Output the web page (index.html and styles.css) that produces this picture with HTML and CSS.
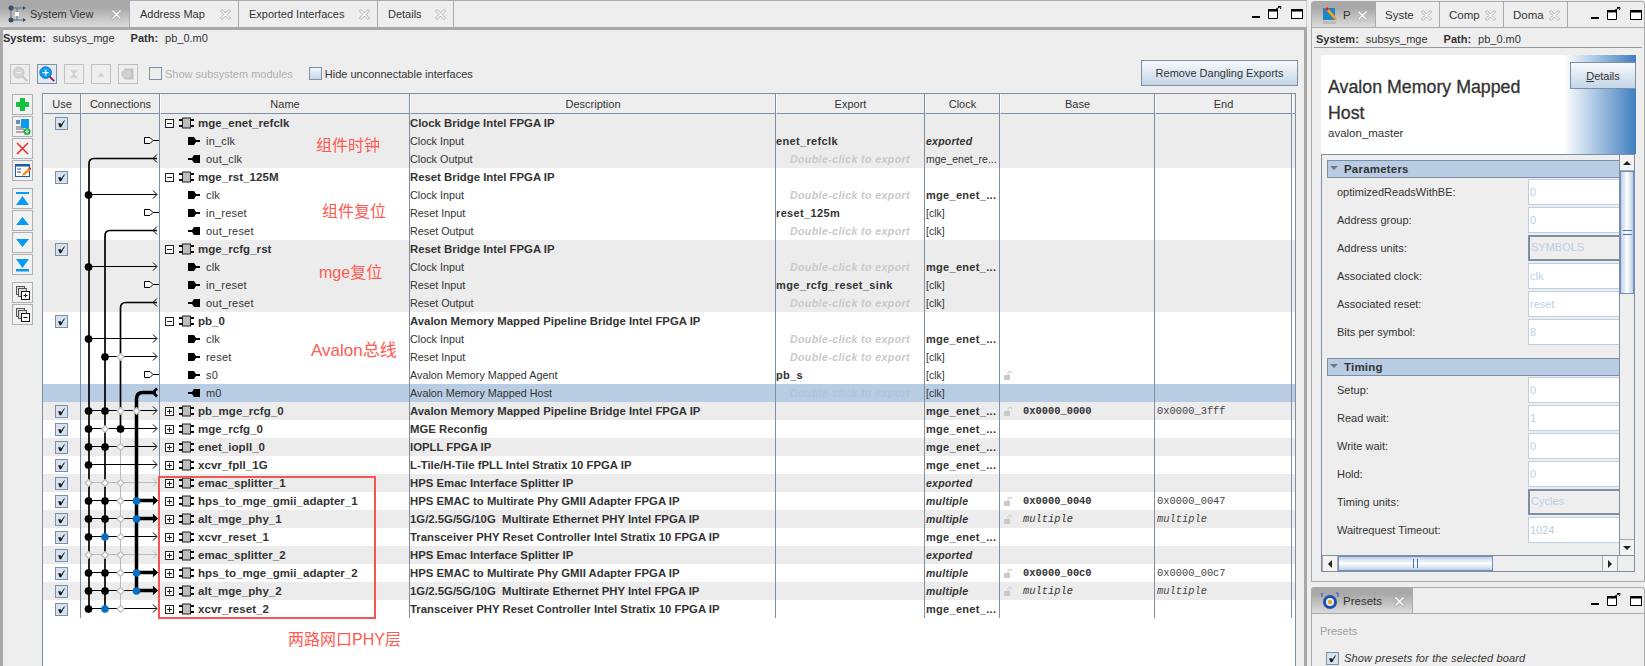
FILE: index.html
```html
<!DOCTYPE html>
<html lang="en">
<head>
<meta charset="utf-8">
<title>System View</title>
<link rel="stylesheet" href="styles.css">
</head>
<body class="app">
<svg class="sprite" width="0" height="0">
  <symbol id="x" viewBox="0 0 11 11"><path d="M2 0.5 5.5 4 9 0.5 10.5 2 7 5.5 10.5 9 9 10.5 5.5 7 2 10.5 0.5 9 4 5.5 0.5 2Z" fill="#fff" stroke="#999" stroke-width=".8"/></symbol>
  <symbol id="chip" viewBox="0 0 15 12"><path d="M0 2h4v2H0zM0 8h4v2H0zM11 2h4v2h-4zM11 8h4v2h-4z" fill="#111"/><rect x="3.5" y="1" width="8" height="10" fill="#bdbdbd" stroke="#222"/></symbol>
  <symbol id="plus" viewBox="0 0 9 9"><rect x=".5" y=".5" width="8" height="8" fill="#fff" stroke="#222"/><path d="M2 4.5h5M4.500 2v5" stroke="#222"/></symbol>
  <symbol id="minus" viewBox="0 0 9 9"><rect x=".5" y=".5" width="8" height="8" fill="#fff" stroke="#222"/><path d="M2 4.500h5" stroke="#222"/></symbol>
  <symbol id="in" viewBox="0 0 12 8"><path d="M0 0h6l2 3h4v2H8L6 8H0z" fill="#000"/></symbol>
  <symbol id="out" viewBox="0 0 12 8"><path d="M12 0H6L4 3H0v2h4l2 3h6z" fill="#000"/></symbol>
  <symbol id="chk" viewBox="0 0 13 13"><rect x=".5" y=".5" width="12" height="12" fill="#d5e2f0" stroke="#7c8fa5"/><path d="M3.500 6.500 5.500 6.500 6 8 9.500 3.500 6 10 4.800 10Z" fill="#111" stroke="#111" stroke-width=".5"/></symbol>
  <symbol id="lock" viewBox="0 0 9 9"><path d="M0 4h6v5H0z" fill="#c9c9c9"/><path d="M4 4V2a2 1.500 0 0 1 4 0" fill="none" stroke="#c9c9c9"/></symbol>
  <symbol id="wmin" viewBox="0 0 10 10"><rect x="0" y="7" width="8" height="2" fill="#000"/></symbol>
  <symbol id="wrest" viewBox="0 0 15 13"><path d="M.5 3.500h9v9h-9z" fill="#fff" stroke="#000"/><rect y="3" width="10" height="2.500"/><path d="M8 3 12 1M10 .5 13 .5 12.500 3" fill="none" stroke="#000"/></symbol>
  <symbol id="wmax" viewBox="0 0 12 10"><rect x=".5" y=".5" width="11" height="9" fill="#fff" stroke="#000"/><rect width="12" height="2.500"/></symbol>
</svg>

<section class="main">
  <nav class="tabbar">
    <div class="tab tab-active tab-sys">
      <svg class="tabicon" viewBox="0 0 18 18"><path d="M3 3h12M3 15h12M3 3v12M9 3v12" stroke="#57708c" fill="none"/><circle cx="3" cy="3" r="2.500" fill="#34506e"/><circle cx="3" cy="15" r="2.500" fill="#34506e"/><path d="M15 1l3 2-3 2zM15 13l3 2-3 2z" fill="#34506e"/><rect x="7" y="7" width="4" height="4" fill="#fff"/></svg>
      <span class="tablabel">System View</span><svg class="tabx"><use href="#x"/></svg>
    </div>
    <div class="tab tab-addr"><span class="tablabel">Address Map</span><svg class="tabx"><use href="#x"/></svg></div>
    <div class="tab tab-exp"><span class="tablabel">Exported Interfaces</span><svg class="tabx"><use href="#x"/></svg></div>
    <div class="tab tab-det"><span class="tablabel">Details</span><svg class="tabx"><use href="#x"/></svg></div>
    <div class="wins">
      <svg class="w-min"><use href="#wmin"/></svg><svg class="w-rest"><use href="#wrest"/></svg><svg class="w-max"><use href="#wmax"/></svg>
    </div>
  </nav>
  <div class="pane">
    <div class="sysline"><b>System:</b><span class="sysval">subsys_mge</span><b>Path:</b><span>pb_0.m0</span></div>
    <div class="toolbar">
      <span class="tbtn tbtn-off"><svg viewBox="0 0 20 20"><circle cx="8.500" cy="8.500" r="6" fill="#d0d0d0" stroke="#bbb"/><path d="M6 8.500h5" stroke="#eee" stroke-width="1.500"/><path d="M13 13l5 5" stroke="#bbb" stroke-width="2"/></svg></span>
      <span class="tbtn tbtn-on"><svg viewBox="0 0 20 20"><circle cx="8.500" cy="8.500" r="6.500" fill="#0a9bf0" stroke="#1570b0"/><path d="M5 8.500h7M8.500 5v7" stroke="#fff" stroke-width="1.500"/><path d="M13 13l5 5" stroke="#b01030" stroke-width="2"/></svg></span>
      <span class="tbtn tbtn-off"><svg viewBox="0 0 20 20"><path d="M6 6h8M6 14h8M7 7l3 3 3-3zM7 13l3-3 3 3z" fill="#ccc" stroke="#ccc"/></svg></span>
      <span class="tbtn tbtn-off"><svg viewBox="0 0 20 20"><path d="M6 13l4-5 4 5z" fill="#ccc"/></svg></span>
      <span class="tbtn tbtn-off"><svg viewBox="0 0 20 20"><path d="M3 8l4-4h9v12H7L3 12z" fill="#bbb"/><circle cx="9" cy="10" r="4.500" fill="#ccc"/></svg></span>
      <label class="opt opt-off"><span class="box"></span>Show subsystem modules</label>
      <label class="opt opt-on"><span class="box box-on"></span>Hide unconnectable interfaces</label>
      <button class="btn-dangling">Remove Dangling Exports</button>
    </div>
    <div class="workspace">
      <aside class="side">
        <span class="sbtn"><svg viewBox="0 0 19 19"><path d="M7 3h5v4h4v5h-4v4H7v-4H3V7h4z" fill="#16c040"/></svg></span>
        <span class="sbtn"><svg viewBox="0 0 19 19"><rect x="3" y="9" width="8" height="4" fill="#aaa"/><rect x="3" y="14" width="9" height="2" fill="#aaa"/><rect x="8" y="2" width="8" height="9" fill="#0a9bf0"/><rect x="3" y="3" width="4" height="4" fill="#6a8db0"/><circle cx="14" cy="14.500" r="3.500" fill="#20b050"/><path d="M12 14.500h4M14 12.500v4" stroke="#fff"/></svg></span>
        <span class="sbtn"><svg viewBox="0 0 19 19"><path d="M4 4l11 11M15 4 4 15" stroke="#e8342c" stroke-width="1.600"/></svg></span>
        <span class="sbtn"><svg viewBox="0 0 19 19"><rect x="2.500" y="3.500" width="14" height="12" fill="#fff" stroke="#1c5aa8"/><rect x="2" y="3" width="15" height="2.500" fill="#1c5aa8"/><path d="M4 8h4M4 11h4" stroke="#1c5aa8"/><path d="M9 15l1-3 6-5 2 2-6 5z" fill="#f29a1e"/><path d="M15 7l2-1 1 2-1 1z" fill="#e02020"/></svg></span>
        <span class="sbtn sbtn-gap"><svg viewBox="0 0 19 19"><path d="M3 3h13v2H3z" fill="#0a9bf0"/><path d="M3 16h13l-6.500-9z" fill="#0a9bf0"/></svg></span>
        <span class="sbtn"><svg viewBox="0 0 19 19"><path d="M3 14h13L9.500 6z" fill="#0a9bf0"/></svg></span>
        <span class="sbtn"><svg viewBox="0 0 19 19"><path d="M3 6h13l-6.500 8z" fill="#0a9bf0"/></svg></span>
        <span class="sbtn"><svg viewBox="0 0 19 19"><path d="M3 14h13v2.500H3z" fill="#0a9bf0"/><path d="M3 4h13l-6.500 9z" fill="#0a9bf0"/></svg></span>
        <span class="sbtn sbtn-gap"><svg viewBox="0 0 19 19"><rect x="3.500" y="3.500" width="8" height="8" fill="#ddd" stroke="#555"/><rect x="5.500" y="5.500" width="8" height="8" fill="#ddd" stroke="#555"/><rect x="8.500" y="8.500" width="8" height="8" fill="#fff" stroke="#111"/><path d="M10.500 12.500h4M12.500 10.500v4" stroke="#111"/></svg></span>
        <span class="sbtn"><svg viewBox="0 0 19 19"><rect x="3.500" y="3.500" width="8" height="8" fill="#ddd" stroke="#555"/><rect x="5.500" y="5.500" width="8" height="8" fill="#ddd" stroke="#555"/><rect x="8.500" y="8.500" width="8" height="8" fill="#fff" stroke="#111"/><path d="M10.500 12.500h4" stroke="#111"/></svg></span>
      </aside>
      <div class="table">
        <div class="row head"><div>Use</div><div>Connections</div><div>Name</div><div>Description</div><div>Export</div><div>Clock</div><div>Base</div><div>End</div><div></div></div>
        <div class="rows">
          <div class="row g"><div class="c-use"><svg class="chk"><use href="#chk"/></svg></div><div></div><div class="c-name"><svg class="tree"><use href="#minus"/></svg><svg class="chip"><use href="#chip"/></svg><b>mge_enet_refclk</b></div><div class="c-desc"><b>Clock Bridge Intel FPGA IP</b></div><div></div><div></div><div></div><div></div><div></div></div>
          <div class="row g"><div></div><div></div><div class="c-name child"><svg class="port"><use href="#in"/></svg>in_clk</div><div class="c-desc">Clock Input</div><div class="c-exp"><b>enet_refclk</b></div><div class="c-clk"><em>exported</em></div><div></div><div></div><div></div></div>
          <div class="row g"><div></div><div></div><div class="c-name child"><svg class="port"><use href="#out"/></svg>out_clk</div><div class="c-desc">Clock Output</div><div class="c-exp"><i class="dbl">Double-click to export</i></div><div class="c-clk">mge_enet_re...</div><div></div><div></div><div></div></div>

          <div class="row"><div class="c-use"><svg class="chk"><use href="#chk"/></svg></div><div></div><div class="c-name"><svg class="tree"><use href="#minus"/></svg><svg class="chip"><use href="#chip"/></svg><b>mge_rst_125M</b></div><div class="c-desc"><b>Reset Bridge Intel FPGA IP</b></div><div></div><div></div><div></div><div></div><div></div></div>
          <div class="row"><div></div><div></div><div class="c-name child"><svg class="port"><use href="#in"/></svg>clk</div><div class="c-desc">Clock Input</div><div class="c-exp"><i class="dbl">Double-click to export</i></div><div class="c-clk"><b>mge_enet_...</b></div><div></div><div></div><div></div></div>
          <div class="row"><div></div><div></div><div class="c-name child"><svg class="port"><use href="#in"/></svg>in_reset</div><div class="c-desc">Reset Input</div><div class="c-exp"><b>reset_125m</b></div><div class="c-clk">[clk]</div><div></div><div></div><div></div></div>
          <div class="row"><div></div><div></div><div class="c-name child"><svg class="port"><use href="#out"/></svg>out_reset</div><div class="c-desc">Reset Output</div><div class="c-exp"><i class="dbl">Double-click to export</i></div><div class="c-clk">[clk]</div><div></div><div></div><div></div></div>

          <div class="row g"><div class="c-use"><svg class="chk"><use href="#chk"/></svg></div><div></div><div class="c-name"><svg class="tree"><use href="#minus"/></svg><svg class="chip"><use href="#chip"/></svg><b>mge_rcfg_rst</b></div><div class="c-desc"><b>Reset Bridge Intel FPGA IP</b></div><div></div><div></div><div></div><div></div><div></div></div>
          <div class="row g"><div></div><div></div><div class="c-name child"><svg class="port"><use href="#in"/></svg>clk</div><div class="c-desc">Clock Input</div><div class="c-exp"><i class="dbl">Double-click to export</i></div><div class="c-clk"><b>mge_enet_...</b></div><div></div><div></div><div></div></div>
          <div class="row g"><div></div><div></div><div class="c-name child"><svg class="port"><use href="#in"/></svg>in_reset</div><div class="c-desc">Reset Input</div><div class="c-exp"><b>mge_rcfg_reset_sink</b></div><div class="c-clk">[clk]</div><div></div><div></div><div></div></div>
          <div class="row g"><div></div><div></div><div class="c-name child"><svg class="port"><use href="#out"/></svg>out_reset</div><div class="c-desc">Reset Output</div><div class="c-exp"><i class="dbl">Double-click to export</i></div><div class="c-clk">[clk]</div><div></div><div></div><div></div></div>

          <div class="row"><div class="c-use"><svg class="chk"><use href="#chk"/></svg></div><div></div><div class="c-name"><svg class="tree"><use href="#minus"/></svg><svg class="chip"><use href="#chip"/></svg><b>pb_0</b></div><div class="c-desc"><b>Avalon Memory Mapped Pipeline Bridge Intel FPGA IP</b></div><div></div><div></div><div></div><div></div><div></div></div>
          <div class="row"><div></div><div></div><div class="c-name child"><svg class="port"><use href="#in"/></svg>clk</div><div class="c-desc">Clock Input</div><div class="c-exp"><i class="dbl">Double-click to export</i></div><div class="c-clk"><b>mge_enet_...</b></div><div></div><div></div><div></div></div>
          <div class="row"><div></div><div></div><div class="c-name child"><svg class="port"><use href="#in"/></svg>reset</div><div class="c-desc">Reset Input</div><div class="c-exp"><i class="dbl">Double-click to export</i></div><div class="c-clk">[clk]</div><div></div><div></div><div></div></div>
          <div class="row"><div></div><div></div><div class="c-name child"><svg class="port"><use href="#in"/></svg>s0</div><div class="c-desc">Avalon Memory Mapped Agent</div><div class="c-exp"><b>pb_s</b></div><div class="c-clk">[clk]</div><div class="c-base"><svg class="lock"><use href="#lock"/></svg></div><div></div><div></div></div>
          <div class="row sel"><div></div><div></div><div class="c-name child"><svg class="port"><use href="#out"/></svg>m0</div><div class="c-desc">Avalon Memory Mapped Host</div><div class="c-exp"><i class="dbl">Double-click to export</i></div><div class="c-clk">[clk]</div><div></div><div></div><div></div></div>

          <div class="row g"><div class="c-use"><svg class="chk"><use href="#chk"/></svg></div><div></div><div class="c-name"><svg class="tree"><use href="#plus"/></svg><svg class="chip"><use href="#chip"/></svg><b>pb_mge_rcfg_0</b></div><div class="c-desc"><b>Avalon Memory Mapped Pipeline Bridge Intel FPGA IP</b></div><div></div><div class="c-clk"><b>mge_enet_...</b></div><div class="c-base"><svg class="lock"><use href="#lock"/></svg><b class="addr">0x0000_0000</b></div><div class="c-end">0x0000_3fff</div><div></div></div>
          <div class="row"><div class="c-use"><svg class="chk"><use href="#chk"/></svg></div><div></div><div class="c-name"><svg class="tree"><use href="#plus"/></svg><svg class="chip"><use href="#chip"/></svg><b>mge_rcfg_0</b></div><div class="c-desc"><b>MGE Reconfig</b></div><div></div><div class="c-clk"><b>mge_enet_...</b></div><div></div><div></div><div></div></div>
          <div class="row g"><div class="c-use"><svg class="chk"><use href="#chk"/></svg></div><div></div><div class="c-name"><svg class="tree"><use href="#plus"/></svg><svg class="chip"><use href="#chip"/></svg><b>enet_iopll_0</b></div><div class="c-desc"><b>IOPLL FPGA IP</b></div><div></div><div class="c-clk"><b>mge_enet_...</b></div><div></div><div></div><div></div></div>
          <div class="row"><div class="c-use"><svg class="chk"><use href="#chk"/></svg></div><div></div><div class="c-name"><svg class="tree"><use href="#plus"/></svg><svg class="chip"><use href="#chip"/></svg><b>xcvr_fpll_1G</b></div><div class="c-desc"><b>L-Tile/H-Tile fPLL Intel Stratix 10 FPGA IP</b></div><div></div><div class="c-clk"><b>mge_enet_...</b></div><div></div><div></div><div></div></div>
          <div class="row g"><div class="c-use"><svg class="chk"><use href="#chk"/></svg></div><div></div><div class="c-name"><svg class="tree"><use href="#plus"/></svg><svg class="chip"><use href="#chip"/></svg><b>emac_splitter_1</b></div><div class="c-desc"><b>HPS Emac Interface Splitter IP</b></div><div></div><div class="c-clk"><em>exported</em></div><div></div><div></div><div></div></div>
          <div class="row"><div class="c-use"><svg class="chk"><use href="#chk"/></svg></div><div></div><div class="c-name"><svg class="tree"><use href="#plus"/></svg><svg class="chip"><use href="#chip"/></svg><b>hps_to_mge_gmii_adapter_1</b></div><div class="c-desc"><b>HPS EMAC to Multirate Phy GMII Adapter FPGA IP</b></div><div></div><div class="c-clk"><em>multiple</em></div><div class="c-base"><svg class="lock"><use href="#lock"/></svg><b class="addr">0x0000_0040</b></div><div class="c-end">0x0000_0047</div><div></div></div>
          <div class="row g"><div class="c-use"><svg class="chk"><use href="#chk"/></svg></div><div></div><div class="c-name"><svg class="tree"><use href="#plus"/></svg><svg class="chip"><use href="#chip"/></svg><b>alt_mge_phy_1</b></div><div class="c-desc"><b>1G/2.5G/5G/10G &nbsp;Multirate Ethernet PHY Intel FPGA IP</b></div><div></div><div class="c-clk"><em>multiple</em></div><div class="c-base"><svg class="lock"><use href="#lock"/></svg><i class="addr">multiple</i></div><div class="c-end"><i>multiple</i></div><div></div></div>
          <div class="row"><div class="c-use"><svg class="chk"><use href="#chk"/></svg></div><div></div><div class="c-name"><svg class="tree"><use href="#plus"/></svg><svg class="chip"><use href="#chip"/></svg><b>xcvr_reset_1</b></div><div class="c-desc"><b>Transceiver PHY Reset Controller Intel Stratix 10 FPGA IP</b></div><div></div><div class="c-clk"><b>mge_enet_...</b></div><div></div><div></div><div></div></div>
          <div class="row g"><div class="c-use"><svg class="chk"><use href="#chk"/></svg></div><div></div><div class="c-name"><svg class="tree"><use href="#plus"/></svg><svg class="chip"><use href="#chip"/></svg><b>emac_splitter_2</b></div><div class="c-desc"><b>HPS Emac Interface Splitter IP</b></div><div></div><div class="c-clk"><em>exported</em></div><div></div><div></div><div></div></div>
          <div class="row"><div class="c-use"><svg class="chk"><use href="#chk"/></svg></div><div></div><div class="c-name"><svg class="tree"><use href="#plus"/></svg><svg class="chip"><use href="#chip"/></svg><b>hps_to_mge_gmii_adapter_2</b></div><div class="c-desc"><b>HPS EMAC to Multirate Phy GMII Adapter FPGA IP</b></div><div></div><div class="c-clk"><em>multiple</em></div><div class="c-base"><svg class="lock"><use href="#lock"/></svg><b class="addr">0x0000_00c0</b></div><div class="c-end">0x0000_00c7</div><div></div></div>
          <div class="row g"><div class="c-use"><svg class="chk"><use href="#chk"/></svg></div><div></div><div class="c-name"><svg class="tree"><use href="#plus"/></svg><svg class="chip"><use href="#chip"/></svg><b>alt_mge_phy_2</b></div><div class="c-desc"><b>1G/2.5G/5G/10G &nbsp;Multirate Ethernet PHY Intel FPGA IP</b></div><div></div><div class="c-clk"><em>multiple</em></div><div class="c-base"><svg class="lock"><use href="#lock"/></svg><i class="addr">multiple</i></div><div class="c-end"><i>multiple</i></div><div></div></div>
          <div class="row"><div class="c-use"><svg class="chk"><use href="#chk"/></svg></div><div></div><div class="c-name"><svg class="tree"><use href="#plus"/></svg><svg class="chip"><use href="#chip"/></svg><b>xcvr_reset_2</b></div><div class="c-desc"><b>Transceiver PHY Reset Controller Intel Stratix 10 FPGA IP</b></div><div></div><div class="c-clk"><b>mge_enet_...</b></div><div></div><div></div><div></div></div>

          <svg class="wires" viewBox="81 114 79 504" width="79" height="504">
            <defs>
              <g id="dot"><path d="M0-4 3-3 4 0 3 3 0 4-3 3-4 0-3-3Z" fill="#000"/></g>
              <g id="blue"><circle r="3.800" fill="#0870c4"/></g>
              <g id="gh"><path d="M0-3.500 3.500 0 0 3.500-3.500 0Z" fill="#fff" stroke="#bbb" stroke-width="1.200"/></g>
              <g id="d"><path d="M144.500-3.500H150L153-.5 150 2.500H144.500Z" fill="#fff" stroke="#000"/><path d="M153-.5h6" stroke="#000"/></g>
              <g id="ar"><path d="M89-.5H156.500M153-4.500 157-.5 153 3.500" fill="none" stroke="#000"/></g>
              <g id="arg"><path d="M89-.5H156.500M153-4.500 157-.5 153 3.500" fill="none" stroke="#bbb"/></g>
              <g id="th"><path d="M137-.5H155" stroke="#000" stroke-width="3.500"/><path d="M153-5 158-.5 153 4Z" fill="#000"/></g>
            </defs>
            <path class="v-g" d="M120.500 429V609"/>
            <use href="#arg" y="483"/><use href="#arg" y="555"/>
            <use href="#d" y="141"/><use href="#d" y="213"/><use href="#d" y="285"/><use href="#d" y="375"/>
            <path class="v" d="M157 158.500H94Q89 158.500 89 164V609"/>
            <path class="src" d="M157 154.500 153 158.500 157 162.500"/>
            <path class="v" d="M157 230.500H110Q105 230.500 105 236V609"/>
            <path class="src" d="M157 226.500 153 230.500 157 234.500"/>
            <path class="v" d="M157 302.500H126Q120.500 302.500 120.500 308V429"/>
            <path class="src" d="M157 298.500 153 302.500 157 306.500"/>
            <path class="thick" d="M156 392.500H143Q136.500 392.500 136.500 399V591"/>
            <path class="srcb" d="M157 388.500 153 392.500 157 396.500"/>
            <use href="#ar" y="195"/><use href="#ar" y="267"/><use href="#ar" y="339"/>
            <path class="h" d="M105 356.500H156.500M153 352.500 157 356.500 153 360.500"/>
            <use href="#ar" y="411"/><use href="#ar" y="429"/><use href="#ar" y="447"/><use href="#ar" y="465"/>
            <use href="#ar" y="501"/><use href="#ar" y="519"/><use href="#ar" y="537"/>
            <use href="#ar" y="573"/><use href="#ar" y="591"/><use href="#ar" y="609"/>
            <use href="#th" y="501"/><use href="#th" y="519"/><use href="#th" y="573"/><use href="#th" y="591"/>
            <use href="#dot" x="88.500" y="195"/><use href="#dot" x="88.500" y="267"/><use href="#dot" x="88.500" y="339"/>
            <use href="#dot" x="105" y="357"/><use href="#gh" x="120.500" y="357"/>
            <use href="#dot" x="88.500" y="411"/><use href="#dot" x="105" y="411"/><use href="#gh" x="120.500" y="411"/><use href="#gh" x="136.500" y="411"/>
            <use href="#dot" x="88.500" y="429"/><use href="#gh" x="105" y="429"/><use href="#dot" x="120.500" y="429"/>
            <use href="#dot" x="88.500" y="447"/><use href="#dot" x="105" y="447"/><use href="#gh" x="120.500" y="447"/>
            <use href="#dot" x="88.500" y="465"/>
            <use href="#gh" x="88.500" y="483"/><use href="#gh" x="105" y="483"/><use href="#gh" x="120.500" y="483"/>
            <use href="#dot" x="88.500" y="501"/><use href="#dot" x="105" y="501"/><use href="#gh" x="120.500" y="501"/><use href="#blue" x="136.500" y="501"/>
            <use href="#dot" x="88.500" y="519"/><use href="#dot" x="105" y="519"/><use href="#gh" x="120.500" y="519"/><use href="#blue" x="136.500" y="519"/>
            <use href="#dot" x="88.500" y="537"/><use href="#blue" x="105" y="537"/><use href="#gh" x="120.500" y="537"/>
            <use href="#gh" x="88.500" y="555"/><use href="#gh" x="105" y="555"/><use href="#gh" x="120.500" y="555"/>
            <use href="#dot" x="88.500" y="573"/><use href="#dot" x="105" y="573"/><use href="#gh" x="120.500" y="573"/><use href="#blue" x="136.500" y="573"/>
            <use href="#dot" x="88.500" y="591"/><use href="#dot" x="105" y="591"/><use href="#gh" x="120.500" y="591"/><use href="#blue" x="136.500" y="591"/>
            <use href="#dot" x="88.500" y="609"/><use href="#blue" x="105" y="609"/><use href="#gh" x="120.500" y="609"/>
          </svg>

          <span class="note n1">组件时钟</span>
          <span class="note n2">组件复位</span>
          <span class="note n3">mge复位</span>
          <span class="note n4">Avalon总线</span>
          <span class="note n5">两路网口PHY层</span>
          <div class="redbox"></div>
        </div>
      </div>
    </div>
  </div>
</section>

<aside class="rightcol">
  <section class="rpane">
    <nav class="rtabs">
      <div class="rtab rtab-active">
        <svg class="tabicon" viewBox="0 0 18 18"><rect x="2" y="2" width="12" height="12" fill="#1b87c9"/><path d="M4 3l9 10 3 1-1-3L6 1z" fill="#f2a124"/><path d="M4 3l2-2 2 2-2 2z" fill="#d81f26"/><rect x="2" y="15" width="13" height="3" fill="#bbb"/></svg>
        <span class="tablabel">P</span><svg class="tabx"><use href="#x"/></svg>
      </div>
      <div class="rtab"><span class="tablabel">Syste</span><svg class="tabx"><use href="#x"/></svg></div>
      <div class="rtab"><span class="tablabel">Comp</span><svg class="tabx"><use href="#x"/></svg></div>
      <div class="rtab"><span class="tablabel">Doma</span><svg class="tabx"><use href="#x"/></svg></div>
      <div class="wins wins-r"><svg class="w-min"><use href="#wmin"/></svg><svg class="w-rest"><use href="#wrest"/></svg><svg class="w-max"><use href="#wmax"/></svg></div>
    </nav>
    <div class="sysline sysline-r"><b>System:</b><span class="sysval">subsys_mge</span><b>Path:</b><span>pb_0.m0</span></div>
    <header class="hero">
      <div class="hero-text">
        <h1>Avalon Memory Mapped<br>Host</h1>
        <p>avalon_master</p>
      </div>
      <button class="btn-details"><u>D</u>etails</button>
    </header>
    <div class="scrollbox">
      <div class="scroll-top">
        <div class="form">
          <div class="sect"><span class="tri"></span>Parameters</div>
          <div class="field"><label>optimizedReadsWithBE:</label><span class="inp">0</span></div>
          <div class="field"><label>Address group:</label><span class="inp">0</span></div>
          <div class="field"><label>Address units:</label><span class="inp combo">SYMBOLS</span></div>
          <div class="field"><label>Associated clock:</label><span class="inp">clk</span></div>
          <div class="field"><label>Associated reset:</label><span class="inp">reset</span></div>
          <div class="field"><label>Bits per symbol:</label><span class="inp">8</span></div>
          <div class="sect sect-2"><span class="tri"></span>Timing</div>
          <div class="field"><label>Setup:</label><span class="inp">0</span></div>
          <div class="field"><label>Read wait:</label><span class="inp">1</span></div>
          <div class="field"><label>Write wait:</label><span class="inp">0</span></div>
          <div class="field"><label>Hold:</label><span class="inp">0</span></div>
          <div class="field"><label>Timing units:</label><span class="inp combo">Cycles</span></div>
          <div class="field"><label>Waitrequest Timeout:</label><span class="inp">1024</span></div>
        </div>
        <div class="vbar">
          <span class="sb-btn"><i class="ar-up"></i></span>
          <span class="vthumb"><i class="grip"></i></span>
          <span class="vtrack"></span>
          <span class="sb-btn"><i class="ar-down"></i></span>
        </div>
      </div>
      <div class="hbar">
        <span class="hb-btn"><i class="ar-left"></i></span>
        <span class="hthumb"><i class="hgrip"></i></span>
        <span class="htrack"></span>
        <span class="hb-btn"><i class="ar-right"></i></span>
        <span class="corner"></span>
      </div>
    </div>
  </section>
  <section class="rpane presets">
    <nav class="rtabs rtabs-p">
      <div class="rtab rtab-active rtab-preset">
        <svg class="tabicon" viewBox="0 0 18 18"><circle cx="9" cy="10" r="7" fill="#1f4fb0"/><circle cx="9" cy="10" r="4" fill="#e8eef8"/><circle cx="9" cy="10" r="2.200" fill="#e5a91c"/><path d="M1 1v4M15 1h2v4" stroke="#2a55a8" fill="none"/></svg>
        <span class="tablabel">Presets</span><svg class="tabx"><use href="#x"/></svg>
      </div>
      <div class="wins wins-p"><svg class="w-min"><use href="#wmin"/></svg><svg class="w-rest"><use href="#wrest"/></svg><svg class="w-max"><use href="#wmax"/></svg></div>
    </nav>
    <div class="preset-title">Presets</div>
    <div class="preset-opt"><svg class="chk"><use href="#chk"/></svg><em>Show presets for the selected board</em></div>
  </section>
</aside>
</body>
</html>
```
FILE: styles.css
```css
* { box-sizing: border-box; }
html, body { margin: 0; padding: 0; }
.app {
  width: 1645px; height: 666px; overflow: hidden; display: flex;
  background: #eeeeee; color: #333;
  font: 11px/14px "Liberation Sans", Arial, sans-serif;
}
.sprite { position: absolute; }
svg { display: block; flex: none; }

/* ---- left window ---- */
.main { width: 1307px; height: 666px; display: flex; flex-direction: column; }
.tabbar { height: 27px; display: flex; border-top: 1px solid #aaa; align-items: stretch; border-right: 1px solid #ccc; }
.tab { display: flex; align-items: center; position: relative; border-right: 1px solid #aaa; padding-left: 10px; font-size: 11px; }
.tab-active { background: linear-gradient(#a8a8a8, #a9a9a9 25%, #dcdcdc); padding-left: 8px; }
.tab-sys { width: 130px; }
.tab-addr { width: 109px; }
.tab-exp { width: 139px; }
.tab-det { width: 76px; }
.tabicon { width: 18px; height: 18px; margin-right: 4px; }
.tablabel { white-space: nowrap; color: #333; }
.tabx { position: absolute; right: 7px; top: 8px; width: 11px; height: 11px; }
.wins { margin-left: auto; display: flex; align-items: center; padding-right: 3px; }
.w-min { width: 10px; height: 10px; margin-right: 6px; }
.w-rest { width: 15px; height: 13px; margin-right: 8px; margin-top: -3px; }
.w-max { width: 12px; height: 10px; }

.pane { flex: 1; border: 3px solid #a8a8a8; border-bottom: 0; display: flex; flex-direction: column; min-height: 0; }
.sysline { height: 16px; line-height: 16px; margin-top: 0; display: flex; font-size: 11px; color: #333; }
.sysline b { margin-right: 7px; }
.sysline .sysval { margin-right: 16px; }
.toolbar { height: 47px; display: flex; align-items: center; padding: 8px 0 0 7px; position: relative; }
.tbtn { width: 20px; height: 20px; border: 1px solid #b9b9b9; margin-right: 7px; display: block; }
.tbtn svg { width: 18px; height: 18px; }
.tbtn-on { border-color: #7f93a8; background: #dfe9f3; }
.tbtn-off { opacity: .85; }
.opt { display: flex; align-items: center; font-size: 11px; white-space: nowrap; }
.opt-off { color: #b0b0b0; margin-left: 4px; }
.opt-on { margin-left: 16px; color: #333; }
.box { width: 13px; height: 13px; border: 1px solid #7f93a8; margin-right: 3px; }
.box-on { background: linear-gradient(#f3f7fb, #c5d6e8); }
.btn-dangling {
  margin-left: auto; margin-right: 6px; width: 157px; height: 26px; border: 1px solid #7c8fa5;
  background: linear-gradient(#f8fafc, #c3d5e7); font: 11px "Liberation Sans", Arial, sans-serif; color: #333; padding: 0; margin-top: -1px;
}

.workspace { flex: 1; display: flex; min-height: 0; padding-left: 9px; margin-top: 0; }
.side { width: 30px; display: flex; flex-direction: column; padding-top: 1px; }
.sbtn { width: 21px; height: 21px; border: 1px solid #b0b0b0; background: #f2f2f2; margin-bottom: 1px; }
.sbtn svg { width: 19px; height: 19px; }
.sbtn-gap { margin-top: 6px; }

.table { width: 1254px; height: 573px; background: #fff; border: 1px solid #7f8fa3; border-bottom: 0; }
.row { display: grid; grid-template-columns: 38px 79px 250px 366px 149px 75px 155px 137px 3px; height: 18px; font-size: 10.8px; line-height: 18px; white-space: nowrap; }
.row > div { border-right: 1px solid #7f8fa3; min-width: 0; overflow: hidden; }
.row > div:last-child { border-right: 0; }
.head { height: 20px; background: #eeeeee; text-align: center; line-height: 20px; font-size: 11px; }
.head > div { border-bottom: 1px solid #7f8fa3; border-left: 1px solid #fff; }
.rows { position: relative; height: 504px; }
.g { background: #ececec; }
.sel { background: #b8cde3; }
.c-use { display: flex; align-items: center; justify-content: center; }
.chk { width: 13px; height: 13px; }
.c-name { display: flex; align-items: center; padding-left: 5px; color: #333; font-size: 11px; letter-spacing: .2px; }
.c-name b { letter-spacing: .05px; font-size: 11.500px; }
.tree { width: 9px; height: 9px; margin-right: 5px; }
.chip { width: 15px; height: 12px; margin-right: 4px; }
.child { padding-left: 28px; }
.port { width: 12px; height: 8px; margin-right: 6px; }
.c-desc { padding-left: 0; color: #333; }
.c-desc b { font-size: 11.350px; }
.c-exp { padding-left: 0; font-size: 11px; }
.c-exp b { letter-spacing: .35px; }
.dbl { display: block; text-align: center; font-weight: bold; color: #c9c9c9; letter-spacing: .45px; font-size: 10.500px; }
.sel .dbl { color: #b0c5da; }
.c-clk { padding-left: 1px; font-size: 10.500px; }
.c-clk b { font-size: 11px; letter-spacing: .3px; }
.c-clk em { font-weight: bold; letter-spacing: .25px; }
.c-base { display: flex; align-items: center; padding-left: 4px; }
.lock { width: 9px; height: 9px; margin-right: 10px; }
.addr, .c-end { font-family: "Liberation Mono", monospace; font-size: 10.400px; }
.c-end { padding-left: 2px; color: #444; }
.wires { position: absolute; left: 38px; top: 0; }
.v { fill: none; stroke: #000; stroke-width: 1.700; }
.v-g { fill: none; stroke: #bbb; stroke-width: 1; }
.h { fill: none; stroke: #000; }
.src { fill: none; stroke: #000; }
.srcb { fill: none; stroke: #000; stroke-width: 2.500; }
.thick { fill: none; stroke: #000; stroke-width: 3.500; }
.note { position: absolute; color: #ff5a52; font: 16px/20px "Liberation Sans", "Noto Sans CJK SC", sans-serif; white-space: nowrap; }
.n1 { left: 273px; top: 22px; }
.n2 { left: 279px; top: 88px; }
.n3 { left: 276px; top: 149px; }
.n4 { left: 268px; top: 227px; font-size: 17px; }
.n5 { left: 245px; top: 516px; }
.redbox { position: absolute; left: 115px; top: 362px; width: 218px; height: 143px; border: 2px solid #f55555; }

/* ---- right column ---- */
.rightcol { width: 338px; padding-left: 4px; display: flex; flex-direction: column; height: 666px; }
.rpane { height: 581px; border: 1px solid #aaa; border-radius: 3px 3px 0 0; border-bottom: 1px solid #aaa; display: flex; flex-direction: column; margin-top: 1px; }
.presets { flex: 1; margin-top: 5px; border-bottom: 0; min-height: 0; }
.rtabs { height: 26px; display: flex; border-bottom: 1px solid #aaa; flex: none; }
.rtab { width: 64px; position: relative; display: flex; align-items: center; padding-left: 9px; border-right: 1px solid #aaa; font-size: 11.500px; }
.rtab-active { background: linear-gradient(#a8a8a8, #a9a9a9 25%, #dcdcdc); padding-left: 9px; }
.wins-r, .wins-p { padding-right: 2px; }
.sysline-r { padding: 3px 0 0 2px; height: 20px; border-bottom: 1px solid #999; margin: 0 2px 0 2px; flex: none; }
.sysline-r .sysval { margin-right: 16px; }
.hero { height: 99px; margin: 7px 8px 0 9px; background: linear-gradient(90deg, #fff 77%, #3f7fc0); display: flex; flex: none; position: relative; }
.hero-text { padding: 19px 0 0 7px; }
.hero h1 { margin: 0; font-size: 17.800px; line-height: 26px; font-weight: normal; color: #333; -webkit-text-stroke: .3px #333; }
.hero p { margin: 0; font-size: 11.500px; line-height: 14px; }
.btn-details { position: absolute; right: 0; top: 7px; width: 66px; height: 27px; border: 1px solid #7c8fa5; background: linear-gradient(#f8fafc, #c3d5e7); font: 11px "Liberation Sans", Arial, sans-serif; color: #333; padding: 0; }
.scrollbox { height: 418px; margin: 0 8px 0 9px; border: 1px solid #7f8fa3; display: flex; flex-direction: column; flex: none; width: 314px; }
.scroll-top { flex: 1; display: flex; min-height: 0; }
.form { flex: 1; padding: 5px 0 0 5px; min-width: 0; overflow: hidden; }
.sect { height: 18px; background: #b8cde3; border: 1px solid #7f8fa3; font: bold 11.500px/17px "Liberation Sans", Arial, sans-serif; letter-spacing: .2px; color: #333; display: flex; align-items: center; border-right: 0; }
.sect-2 { margin-top: 12px; }
.tri { width: 0; height: 0; border: 4px solid transparent; border-top: 4px solid #777; border-bottom: 0; margin: 0 6px 3px 2px; }
.field { height: 28px; display: flex; align-items: center; justify-content: space-between; padding-left: 10px; font-size: 11px; }
.inp { width: 91px; height: 26px; border: 1px solid #bccfe3; border-right: 0; background: #fff; color: #bccfe3; line-height: 24px; padding-left: 1px; font-size: 11px; }
.combo { background: #eeeeee; border: 2px solid #7f8fa3; border-right: 0; padding-left: 1px; line-height: 21px; }
.vbar { width: 15px; display: flex; flex-direction: column; border-left: 1px solid #7f8fa3; }
.sb-btn { height: 16px; background: #f3f3f3; border-bottom: 1px solid #aaa; display: flex; align-items: center; justify-content: center; flex: none; }
.sb-btn:last-child { border-top: 1px solid #aaa; border-bottom: 0; }
.vthumb { height: 123px; border: 1px solid #6e8fc0; background: linear-gradient(90deg, #bdd0e8, #fff 50%, #bdd0e8); display: flex; align-items: center; justify-content: center; flex: none; }
.grip { width: 9px; height: 5px; border-top: 1px solid #5570a8; border-bottom: 1px solid #5570a8; position: relative; }
.vtrack { flex: 1; }
.ar-up { border: 4px solid transparent; border-bottom: 4px solid #222; border-top: 0; width: 0; height: 0; border-left-width: 4px; }
.ar-down { border: 4px solid transparent; border-top: 4px solid #222; border-bottom: 0; width: 0; height: 0; }
.ar-left { border: 4px solid transparent; border-right: 4px solid #222; border-left: 0; width: 0; height: 0; }
.ar-right { border: 4px solid transparent; border-left: 4px solid #222; border-right: 0; width: 0; height: 0; }
.hbar { height: 16px; display: flex; border-top: 1px solid #7f8fa3; flex: none; }
.hb-btn { width: 16px; display: flex; align-items: center; justify-content: center; background: #f3f3f3; border-left: 1px solid #aaa; border-right: 1px solid #aaa; flex: none; }
.hthumb { width: 155px; border: 1px solid #6e8fc0; background: linear-gradient(#bdd0e8, #fff 50%, #bdd0e8); display: flex; align-items: center; justify-content: center; flex: none; }
.hgrip { width: 5px; height: 9px; border-left: 1px solid #5570a8; border-right: 1px solid #5570a8; }
.htrack { flex: 1; }
.corner { width: 16px; flex: none; }
.rtabs-p .rtab-preset { width: 101px; }
.preset-title { color: #a0a0a0; padding: 10px 0 0 8px; font-size: 11px; height: 30px; flex: none; }
.preset-opt { display: flex; align-items: center; padding-left: 14px; margin-top: 7px; }
.preset-opt em { margin-left: 5px; font-size: 11px; letter-spacing: .15px; }
```
